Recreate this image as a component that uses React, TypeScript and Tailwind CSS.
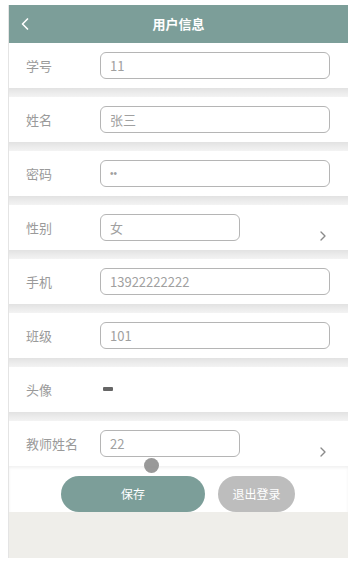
import { ChevronLeft, ChevronRight } from 'lucide-react'

const font = { fontFamily: '"Noto Sans CJK SC", "Liberation Sans", sans-serif' }

interface Field {
  label: string
  value: string
  short?: boolean
  avatar?: boolean
  secret?: boolean
}

const fields: Field[] = [
  { label: '学号', value: '11' },
  { label: '姓名', value: '张三' },
  { label: '密码', value: '••', secret: true },
  { label: '性别', value: '女', short: true },
  { label: '手机', value: '13922222222' },
  { label: '班级', value: '101' },
  { label: '头像', value: '', avatar: true },
  { label: '教师姓名', value: '22', short: true },
]

function Row({ field }: { field: Field }) {
  return (
    <div className="relative flex h-[45px] items-center bg-white">
      <div className="w-[91px] shrink-0 pl-[17px] text-[13px] text-[#9a9a9a]">{field.label}</div>
      {field.avatar ? (
        <div className="ml-[3px] mt-[-2px] h-[4px] w-[10px] rounded-[1px] bg-[#666] blur-[0.7px]" />
      ) : (
        <div
          className={`flex h-[27px] items-center rounded-[6px] border border-[#b5b5b5] bg-white pl-[9px] text-[#a0a0a0] ${
            field.short ? 'w-[140px]' : 'w-[230px]'
          } ${field.secret ? "font-['Liberation_Sans'] text-[10px]" : 'text-[13px]'}`}
        >
          {field.value}
        </div>
      )}
      {field.short && (
        <ChevronRight size={16} strokeWidth={2} className="absolute right-[17px] top-[23px] text-[#8a8a8a]" />
      )}
    </div>
  )
}

export default function App() {
  return (
    <div className="h-[574px] w-[363px] bg-white pt-[5px]" style={font}>
      <div className="ml-[8px] w-[340px] border-l border-[#e4e4e4]">
        {/* Header */}
        <div className="relative flex h-[38px] items-center justify-center bg-[#7c9e99]">
          <ChevronLeft size={20} strokeWidth={2} className="absolute left-[6px] text-white" />
          <div className="text-[13px] font-bold text-white">用户信息</div>
        </div>

        {/* Fields */}
        <div>
          {fields.map((f, i) => (
            <div key={f.label}>
              <Row field={f} />
              {i < fields.length - 1 && (
                <div className="h-[9px] bg-gradient-to-b from-[#e2e2e2] via-[#ebebeb] to-[#f3f3f3]" />
              )}
            </div>
          ))}
        </div>

        {/* Buttons */}
        <div className="relative flex h-[46px] items-center bg-white shadow-[inset_0_2px_3px_rgba(0,0,0,0.06)]">
          <div className="absolute left-[135px] top-[-8px] h-[15px] w-[15px] rounded-full bg-[#8e8e8e] opacity-90" />
          <div className="ml-[52px] mt-[10px] flex h-[36px] w-[144px] items-center justify-center rounded-full bg-[#7c9e99] text-[12px] text-white">
            保存
          </div>
          <div className="ml-[13px] mt-[10px] flex h-[36px] w-[77px] items-center justify-center rounded-full bg-[#bdbdbd] text-[12px] text-white">
            退出登录
          </div>
        </div>

        <div className="h-[46px] bg-[#efeeea]" />
      </div>
    </div>
  )
}
